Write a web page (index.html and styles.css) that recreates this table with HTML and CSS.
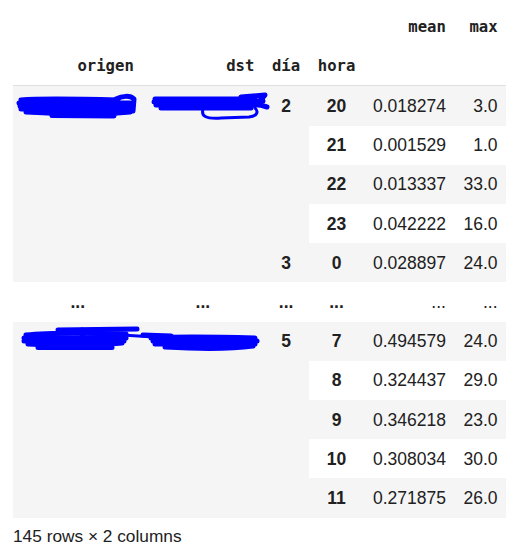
FILE: index.html
```
<!DOCTYPE html>
<html lang="es">
<head>
  <meta charset="UTF-8" />
  <title>DataFrame</title>
  <link rel="stylesheet" href="styles.css">
</head>
<body>

<div class="output">
  <table class="dataframe">
    <thead>
      <tr>
        <th></th><th></th><th></th><th></th>
        <th>mean</th>
        <th>max</th>
      </tr>
      <tr>
        <th>origen</th>
        <th>dst</th>
        <th>día</th>
        <th>hora</th>
        <th></th><th></th>
      </tr>
    </thead>
    <tbody>
      <tr>
        <th rowspan="5">
          <svg class="scribble" width="112" height="20" viewBox="0 0 112 20">
            <path d="M-1 4 C20 2, 60 3, 96 4" />
            <path d="M-3 7 L108 7" />
            <path d="M-2 10 L110 10" />
            <path d="M-1 13 C30 13, 70 14, 110 13" />
            <path d="M4 16 C40 18, 80 19, 108 16" />
            <path d="M30 19.5 L92 20" />
            <path d="M94 3 C100 0, 108 -1, 112 3 L111 15" />
            <path class="thin" d="M10 6 C40 9, 70 11, 100 8" />
          </svg>
        </th>
        <th rowspan="5">
          <svg class="scribble" width="103" height="20" viewBox="0 0 103 20">
            <path d="M4 3 L104 3" />
            <path d="M3 6 C40 8, 80 7, 112 5" />
            <path d="M5 9 L108 9" />
            <path d="M10 12 L100 12" />
            <path d="M90 1 L114 -1 L106 8 L116 11" />
            <path class="thin" d="M52 13 C50 20, 54 23, 70 22 L98 21 C106 20, 108 16, 104 12" />
          </svg>
        </th>
        <th rowspan="4">2</th>
        <th>20</th>
        <td>0.018274</td>
        <td>3.0</td>
      </tr>
      <tr><th>21</th><td>0.001529</td><td>1.0</td></tr>
      <tr><th>22</th><td>0.013337</td><td>33.0</td></tr>
      <tr><th>23</th><td>0.042222</td><td>16.0</td></tr>
      <tr><th>3</th><th>0</th><td>0.028897</td><td>24.0</td></tr>
      <tr>
        <th>...</th><th>...</th><th>...</th><th>...</th>
        <td>...</td><td>...</td>
      </tr>
      <tr>
        <th rowspan="5">
          <svg class="scribble" width="112" height="20" viewBox="0 0 112 20">
            <path d="M36 -1 L115 -2" />
            <path d="M4 4 C30 1, 70 2, 104 3" />
            <path d="M2 7 L104 7" />
            <path d="M2 10 L102 10" />
            <path d="M6 13 C40 15, 70 15, 100 12" />
            <path d="M16 16.5 L90 16.5" />
            <path d="M60 -1 L62 16" />
            <path class="thin" d="M100 4 L132 6" />
          </svg>
        </th>
        <th rowspan="5">
          <svg class="scribble" width="103" height="20" viewBox="0 0 103 20">
            <path d="M-8 4 L20 5" />
            <path d="M0 7 C30 5, 70 6, 104 7" />
            <path d="M2 10 L106 10" />
            <path d="M4 13 L104 13" />
            <path d="M14 16 C50 18, 80 18, 102 15" />
          </svg>
        </th>
        <th rowspan="5">5</th>
        <th>7</th>
        <td>0.494579</td>
        <td>24.0</td>
      </tr>
      <tr><th>8</th><td>0.324437</td><td>29.0</td></tr>
      <tr><th>9</th><td>0.346218</td><td>23.0</td></tr>
      <tr><th>10</th><td>0.308034</td><td>30.0</td></tr>
      <tr><th>11</th><td>0.271875</td><td>26.0</td></tr>
    </tbody>
  </table>
  <p class="shape">145 rows × 2 columns</p>
</div>

</body>
</html>
```

FILE: styles.css
```
* { margin: 0; padding: 0; box-sizing: border-box; }
body { background: #fff; color: #212121; font-family: "Liberation Sans", Arial, sans-serif; }

.output {
  padding: 7px 0 0 13px;
}

.dataframe {
  border-collapse: collapse;
  border-spacing: 0;
  font-size: 17.5px;
  color: #212121;
}

.dataframe th, .dataframe td {
  padding: 9.5px 8.8px;
  line-height: 20.2px;
  text-align: right;
  vertical-align: middle;
  white-space: nowrap;
}

.dataframe thead {
  border-bottom: 1px solid #e0e0e0;
}
.dataframe thead th {
  font-family: "DejaVu Sans Mono", "Liberation Mono", monospace;
  font-size: 15.6px;
  font-weight: bold;
  vertical-align: bottom;
}

.dataframe tbody th {
  font-weight: bold;
  text-align: center;
  vertical-align: top;
}

.dataframe tbody tr:nth-child(odd) { background: #f5f5f5; }

.scribble {
  display: block;
  overflow: visible;
}
.scribble path {
  fill: none;
  stroke: #0000ff;
  stroke-width: 5;
  stroke-linecap: round;
  stroke-linejoin: round;
}
.scribble path.thin { stroke-width: 3; }

.shape {
  margin-top: 8px;
  font-size: 17.3px;
  line-height: 20px;
  color: #212121;
}
```
